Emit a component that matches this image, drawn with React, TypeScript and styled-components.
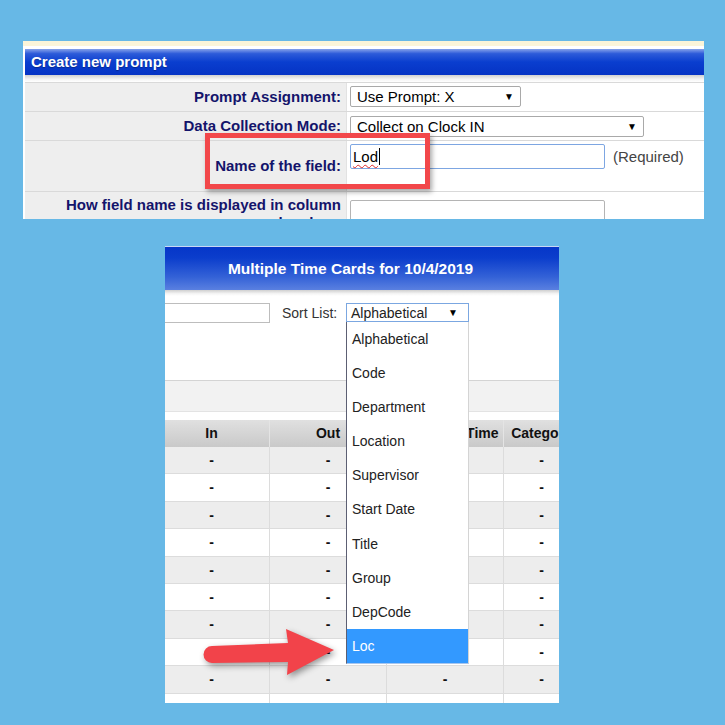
import React from 'react';
import styled, { createGlobalStyle } from 'styled-components';

const Global = createGlobalStyle`
  html, body { margin: 0; padding: 0; background: #67b8e6; }
  body { font-family: "Liberation Sans", Arial, sans-serif; }
  * { box-sizing: border-box; }
`;

const Page = styled.div`
  position: relative;
  width: 725px;
  height: 725px;
  overflow: hidden;
  background: #67b8e6;
  display: flex;
  flex-direction: column;
  padding-top: 41px;
`;

/* ---------- top panel: Create new prompt ---------- */

const PromptPanel = styled.section`
  margin-left: 23px;
  width: 681px;
  height: 178px;
  flex-shrink: 0;
  overflow: hidden;
  background: #fff;
  padding-left: 2px;
  display: flex;
  flex-direction: column;
`;

const CreamStrip = styled.div`
  height: 5px;
  margin-left: -2px;
  flex-shrink: 0;
  background: #fbf5d9;
`;

const PromptHeader = styled.div`
  margin-top: 3px;
  height: 26px;
  flex-shrink: 0;
  padding-left: 6px;
  background: linear-gradient(to bottom, #86a2ea 0%, #2d5bd9 18%, #0a3ecf 50%, #0533c4 100%);
  color: #fff;
  font-size: 15px;
  font-weight: bold;
  line-height: 26px;
  text-shadow: 0 1px 1px rgba(0, 0, 0, 0.3);
`;

const HeaderShade = styled.div<{ $h: number }>`
  height: ${p => p.$h}px;
  flex-shrink: 0;
  background: linear-gradient(to bottom, #cfcfcf, #f4f4f4 60%, #fff);
`;

const FormRow = styled.div<{ $h: number }>`
  display: grid;
  grid-template-columns: 321px 1fr;
  height: ${p => p.$h}px;
  flex-shrink: 0;
  border-top: 1px solid #d9d9d9;
`;

const LabelCell = styled.div<{ $top?: number }>`
  background: #eeeeee;
  color: #14146b;
  font-size: 15px;
  font-weight: bold;
  line-height: 18px;
  text-align: right;
  padding-right: 5px;
  padding-top: ${p => (p.$top !== undefined ? `${p.$top}px` : '0')};
  display: flex;
  justify-content: flex-end;
  align-items: ${p => (p.$top !== undefined ? 'flex-start' : 'center')};
`;

const ValueCell = styled.div<{ $pt: number }>`
  border-left: 1px solid #e2e2e2;
  padding-left: 3px;
  padding-top: ${p => p.$pt}px;
  display: flex;
  align-items: flex-start;
`;

const SelectBox = styled.div<{ $w: number }>`
  width: ${p => p.$w}px;
  height: 21px;
  border: 1px solid #a9a9a9;
  border-radius: 2px;
  background: #fff;
  display: flex;
  align-items: center;
  justify-content: space-between;
  padding: 0 6px;
  font-size: 15px;
  color: #000;
`;

const Caret = styled.span<{ $size?: number }>`
  font-size: ${p => p.$size ?? 10}px;
  color: #000;
  line-height: 1;
`;

const TextInput = styled.div<{ $focused?: boolean; $h: number }>`
  width: 255px;
  height: ${p => p.$h}px;
  border: 1px solid ${p => (p.$focused ? '#7da6e2' : '#b4b4b4')};
  border-radius: 2px;
  background: #fff;
  display: flex;
  align-items: center;
  padding-left: 2px;
  font-size: 15px;
  color: #000;
`;

const Misspelled = styled.span`
  text-decoration: underline wavy #e02a2a;
  text-decoration-thickness: 1px;
  text-underline-offset: 2px;
`;

const Cursor = styled.span`
  display: inline-block;
  width: 1px;
  height: 17px;
  background: #000;
  margin-left: 1px;
`;

const Hint = styled.span`
  margin-left: 8px;
  font-size: 15px;
  line-height: 25px;
  color: #444;
`;

const Highlight = styled.div`
  position: absolute;
  left: 205px;
  top: 133px;
  width: 225px;
  height: 56px;
  border: 5px solid #f2474a;
  box-shadow: 2px 3px 5px rgba(0, 0, 0, 0.35);
  pointer-events: none;
`;

/* ---------- bottom panel: Multiple Time Cards ---------- */

const TimePanel = styled.section`
  position: relative;
  margin-top: 27px;
  margin-left: 165px;
  width: 394px;
  height: 457px;
  flex-shrink: 0;
  overflow: hidden;
  background: #fff;
  display: flex;
  flex-direction: column;
`;

const TimeHeader = styled.div`
  height: 44px;
  flex-shrink: 0;
  border-top: 1px solid #c9d6f4;
  padding-right: 23px;
  background: linear-gradient(to bottom, #0636c8 0%, #0b3dcc 25%, #3462d7 70%, #5a80e0 100%);
  color: #fff;
  font-size: 15.5px;
  font-weight: bold;
  text-align: center;
  line-height: 43px;
`;

const FilterRow = styled.div`
  margin-top: 7px;
  margin-left: -20px;
  height: 20px;
  flex-shrink: 0;
  display: flex;
  align-items: center;
`;

const FilterInput = styled.div`
  width: 125px;
  height: 20px;
  border: 1px solid #bdbdbd;
  background: #fff;
`;

const SortLabel = styled.span`
  margin-left: 12px;
  font-size: 14px;
  color: #333;
`;

const SortSelect = styled.div`
  margin-left: auto;
  margin-right: 90px;
  width: 123px;
  height: 19px;
  align-self: flex-start;
  border: 1px solid #7ba7e1;
  background: #fff;
  display: flex;
  align-items: center;
  justify-content: space-between;
  padding: 0 10px 0 4px;
  font-size: 14px;
  color: #222;
`;

const Spacer = styled.div<{ $h: number }>`
  height: ${p => p.$h}px;
  flex-shrink: 0;
`;

const GreyBar = styled.div`
  height: 32px;
  flex-shrink: 0;
  background: #f2f2f2;
  border-top: 1px solid #d4d4d4;
  border-bottom: 1px solid #e3e3e3;
`;

const Table = styled.div`
  margin-left: -11px;
  display: flex;
  flex-direction: column;
`;

const COLS = '116px 117px 117px 76px';

const HeadRow = styled.div`
  display: grid;
  grid-template-columns: ${COLS};
  height: 27px;
  background: linear-gradient(to bottom, #e0e0e0, #c9c9c9);
`;

const HeadCell = styled.div`
  border-right: 1px solid #e4e4e4;
  font-size: 14px;
  font-weight: bold;
  color: #111;
  text-align: center;
  line-height: 27px;
  white-space: nowrap;
  overflow: hidden;
`;

const BodyRow = styled.div<{ $alt: boolean }>`
  display: grid;
  grid-template-columns: ${COLS};
  height: 27.4px;
  background: ${p => (p.$alt ? '#ededed' : '#fff')};
  border-bottom: 1px solid #dcdcdc;
`;

const BodyCell = styled.div`
  border-right: 1px solid #dcdcdc;
  font-size: 14px;
  font-weight: bold;
  color: #111;
  text-align: center;
  line-height: 26px;
`;

const DropList = styled.ul`
  position: absolute;
  left: 181px;
  top: 76px;
  width: 123px;
  margin: 0;
  padding: 0;
  list-style: none;
  background: #fff;
  border-left: 1px solid #5c5f73;
  border-right: 1px solid #d4d4d4;
  border-bottom: 1px solid #a7c6ee;
`;

const DropItem = styled.li<{ $selected?: boolean }>`
  height: 34.1px;
  line-height: 34px;
  padding-left: 5px;
  font-size: 14px;
  color: ${p => (p.$selected ? '#fff' : '#222')};
  background: ${p => (p.$selected ? '#3399ff' : 'transparent')};
`;

const ArrowSvg = styled.svg`
  position: absolute;
  left: 195px;
  top: 620px;
  width: 150px;
  height: 65px;
  overflow: visible;
  pointer-events: none;
  filter: drop-shadow(2px 3px 3px rgba(0, 0, 0, 0.4));
`;

const sortOptions = [
  'Alphabetical',
  'Code',
  'Department',
  'Location',
  'Supervisor',
  'Start Date',
  'Title',
  'Group',
  'DepCode',
  'Loc',
];

const headers = ['In', 'Out', 'Scheduled Time', 'Category'];

export default function App() {
  const rows = Array.from({ length: 10 }, (_, i) => i);
  return (
    <>
      <Global />
      <Page>
        <PromptPanel>
          <CreamStrip />
          <PromptHeader>Create new prompt</PromptHeader>
          <HeaderShade $h={7} />
          <FormRow $h={29}>
            <LabelCell>Prompt Assignment:</LabelCell>
            <ValueCell $pt={3}>
              <SelectBox $w={171}>
                <span>Use Prompt: X</span>
                <Caret>▼</Caret>
              </SelectBox>
            </ValueCell>
          </FormRow>
          <FormRow $h={29}>
            <LabelCell>Data Collection Mode:</LabelCell>
            <ValueCell $pt={4}>
              <SelectBox $w={294}>
                <span>Collect on Clock IN</span>
                <Caret>▼</Caret>
              </SelectBox>
            </ValueCell>
          </FormRow>
          <FormRow $h={51}>
            <LabelCell>Name of the field:</LabelCell>
            <ValueCell $pt={3}>
              <TextInput $focused $h={25}>
                <Misspelled>Lod</Misspelled>
                <Cursor />
              </TextInput>
              <Hint>(Required)</Hint>
            </ValueCell>
          </FormRow>
          <FormRow $h={50}>
            <LabelCell $top={4}>How field name is displayed in column headers:</LabelCell>
            <ValueCell $pt={8}>
              <TextInput $h={30} />
            </ValueCell>
          </FormRow>
        </PromptPanel>

        <TimePanel>
          <TimeHeader>Multiple Time Cards for 10/4/2019</TimeHeader>
          <HeaderShade $h={6} />
          <FilterRow>
            <FilterInput />
            <SortLabel>Sort List:</SortLabel>
            <SortSelect>
              <span>Alphabetical</span>
              <Caret>▼</Caret>
            </SortSelect>
          </FilterRow>
          <Spacer $h={57} />
          <GreyBar />
          <Spacer $h={8} />
          <Table>
            <HeadRow>
              {headers.map(h => (
                <HeadCell key={h}>{h}</HeadCell>
              ))}
            </HeadRow>
            {rows.map(i => (
              <BodyRow key={i} $alt={i % 2 === 0}>
                {headers.map(h => (
                  <BodyCell key={h}>{i < 9 ? '-' : ''}</BodyCell>
                ))}
              </BodyRow>
            ))}
          </Table>
          <DropList>
            {sortOptions.map(o => (
              <DropItem key={o} $selected={o === 'Loc'}>
                {o}
              </DropItem>
            ))}
          </DropList>
        </TimePanel>

        <Highlight />
        <ArrowSvg viewBox="195 620 150 65">
          <path
            d="M 212 646 L 288 643 L 286 629 L 334 650 L 287 675 L 288 662 L 212 663 A 8.5 8.5 0 0 1 212 646 Z"
            fill="#f2434a"
          />
        </ArrowSvg>
      </Page>
    </>
  );
}
